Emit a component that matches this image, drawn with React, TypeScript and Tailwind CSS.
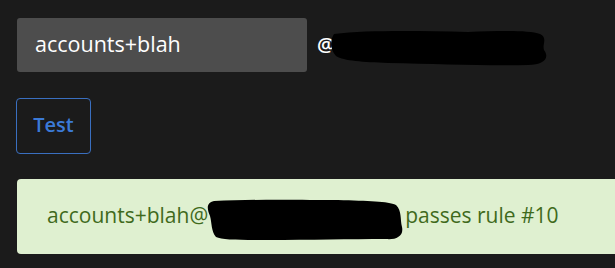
import React from "react";

function ScribbleTop() {
  return (
    <svg width="222" height="40" viewBox="0 0 222 40" className="block">
      <path
        d="M6 6 C40 2, 90 3, 140 4 C170 3, 200 2, 212 6 C220 10, 214 16, 216 22 C222 30, 216 37, 200 37 C160 38, 110 36, 60 35 C35 34, 16 33, 8 28 C2 22, 2 12, 6 6 Z"
        fill="#000"
      />
    </svg>
  );
}

function ScribbleBottom() {
  return (
    <svg width="200" height="42" viewBox="0 0 200 42" className="block">
      <path
        d="M10 2 C50 0, 100 1, 134 1 C164 2, 184 2, 192 6 C198 12, 196 20, 198 28 C200 37, 192 41, 182 40 C146 40, 106 41, 64 41 C34 41, 18 41, 12 38 C7 32, 8 24, 6 17 C3 10, 2 4, 10 2 Z"
        fill="#000"
      />
    </svg>
  );
}

export default function App() {
  return (
    <div
      className="min-h-[268px] w-[615px] overflow-hidden bg-[#1b1b1b] pl-[16px] pt-[18px]"
      style={{ fontFamily: '"Open Sans", "Noto Sans", sans-serif' }}
    >
      <div className="flex items-center">
        <div className="ml-[1px] flex h-[54px] w-[290px] items-center rounded-[3px] bg-[#4d4d4d] pl-[18px] pb-[2px] text-[21.5px] text-white">
          accounts+blah
        </div>
        <div className="ml-[10px] flex items-center">
          <span className="text-[20px] font-semibold text-white">@</span>
          <div className="-ml-[7px] mt-[5px]">
            <ScribbleTop />
          </div>
        </div>
      </div>

      <button className="mt-[26px] flex h-[56px] w-[75px] items-center justify-center rounded-[4px] border border-[#3a6fc0] pb-[2px] text-[20px] font-semibold text-[#3b7ad6]">
        Test
      </button>

      <div className="ml-[1px] mt-[25px] flex h-[75px] items-center rounded-l-[4px] bg-[#dff0d0] pl-[30px] pb-[2px] text-[21px] text-[#3f6a1c]">
        <span>accounts+blah@</span>
        <div className="-ml-[4px] mt-[8px]">
          <ScribbleBottom />
        </div>
        <span className="ml-[1px]">passes rule #10</span>
      </div>
    </div>
  );
}
